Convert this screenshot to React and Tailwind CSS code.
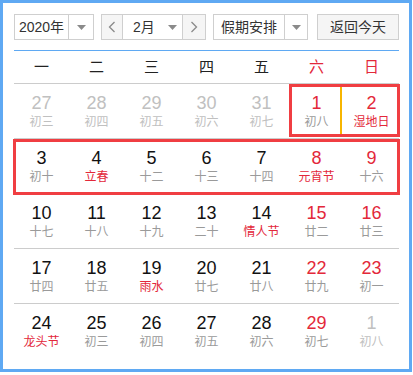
import React from "react";

const GRAY = "text-[#c0c0c0]";
const rows = [
  [
    ["27", "初三", "out"], ["28", "初四", "out"], ["29", "初五", "out"], ["30", "初六", "out"], ["31", "初七", "out"],
    ["1", "初八", "wk"], ["2", "湿地日", "wk", true],
  ],
  [
    ["3", "初十"], ["4", "立春", "", true], ["5", "十二"], ["6", "十三"], ["7", "十四"],
    ["8", "元宵节", "wk", true], ["9", "十六", "wk"],
  ],
  [
    ["10", "十七"], ["11", "十八"], ["12", "十九"], ["13", "二十"], ["14", "情人节", "", true],
    ["15", "廿二", "wk"], ["16", "廿三", "wk"],
  ],
  [
    ["17", "廿四"], ["18", "廿五"], ["19", "雨水", "", true], ["20", "廿七"], ["21", "廿八"],
    ["22", "廿九", "wk"], ["23", "初一", "wk"],
  ],
  [
    ["24", "龙头节", "", true], ["25", "初三"], ["26", "初四"], ["27", "初五"], ["28", "初六"],
    ["29", "初七", "wk"], ["1", "初八", "out"],
  ],
];

function Caret() {
  return (
    <svg width="9" height="5" viewBox="0 0 9 5" className="block">
      <path d="M0 0 L9 0 L4.5 5 Z" fill="#8a8a8a" />
    </svg>
  );
}

function Chevron({ dir }) {
  return (
    <svg width="8" height="12" viewBox="0 0 8 12" className="block">
      <path
        d={dir === "left" ? "M6.5 1 L1.5 6 L6.5 11" : "M1.5 1 L6.5 6 L1.5 11"}
        fill="none"
        stroke="#8a8a8a"
        strokeWidth="1.3"
      />
    </svg>
  );
}

function Cell({ d }) {
  const [num, lunar, kind, fest] = d;
  let numCls = "text-[#111]";
  let lunarCls = "text-[#9a9a9a]";
  if (kind === "out") {
    numCls = GRAY;
    lunarCls = GRAY;
  } else if (kind === "wk") {
    numCls = "text-[#e3283a]";
  }
  if (fest) lunarCls = "text-[#e3283a]";
  return (
    <div className="flex flex-col items-center pt-[9px]">
      <div className={`text-[18px] leading-[20px] ${numCls}`}>{num}</div>
      <div className={`mt-[1px] text-[12px] leading-4 ${lunarCls}`}>{lunar}</div>
    </div>
  );
}

export default function App() {
  return (
    <div
      className="w-[412px] h-[372px] border-[3px] border-[#5fa9f3] bg-white pt-[11px] pl-[11px] pr-[10px]"
      style={{ fontFamily: "'Liberation Sans', 'Noto Sans CJK SC', sans-serif" }}
    >
      {/* header */}
      <div className="flex items-center h-[26px] text-[14px] text-[#333]">
        <div className="flex h-[26px] w-[80px] border border-[#cfcfcf] bg-white">
          <div className="flex w-[54px] items-center justify-center border-r border-[#cfcfcf]">2020年</div>
          <div className="flex flex-1 items-center justify-center"><Caret /></div>
        </div>
        <div className="ml-[7px] flex h-[26px] w-[105px] border border-[#cfcfcf] bg-white">
          <div className="flex w-[21px] items-center justify-center border-r border-[#cfcfcf] bg-[#f5f5f5]"><Chevron dir="left" /></div>
          <div className="flex w-[60px] items-center border-r border-[#cfcfcf] pl-[10px]">
            <span>2月</span>
            <span className="ml-[13px]"><Caret /></span>
          </div>
          <div className="flex flex-1 items-center justify-center bg-[#f5f5f5]"><Chevron dir="right" /></div>
        </div>
        <div className="ml-[7px] flex h-[26px] w-[95px] border border-[#cfcfcf] bg-white">
          <div className="flex w-[71px] items-center justify-center border-r border-[#cfcfcf]">假期安排</div>
          <div className="flex flex-1 items-center justify-center"><Caret /></div>
        </div>
        <div className="ml-[9px] flex h-[26px] w-[82px] items-center justify-center border border-[#cfcfcf] bg-[#f5f5f5]">
          返回今天
        </div>
      </div>

      {/* blue line */}
      <div className="mt-[10px] h-px bg-[#5fa9f3]" />

      {/* weekdays */}
      <div className="grid h-[33px] grid-cols-7 items-center border-b border-[#cccccc] text-[15px]">
        {["一", "二", "三", "四", "五"].map((w) => (
          <div key={w} className="text-center text-[#222]">{w}</div>
        ))}
        <div className="text-center text-[#e3283a]">六</div>
        <div className="text-center text-[#e3283a]">日</div>
      </div>

      {/* days */}
      {rows.map((r, i) => (
        <div
          key={i}
          className={`relative grid h-[55px] grid-cols-7 ${i < rows.length - 1 ? "border-b border-[#cccccc]" : ""}`}
        >
          {r.map((d, j) => (
            <Cell key={j} d={d} />
          ))}
          {i === 0 && (
            <>
              <div className="absolute left-[326px] top-[1px] h-[51px] w-[2px] bg-[#f7b500]" />
              <div className="absolute left-[275px] top-0 h-[53px] w-[111px] border-[3px] border-[#f03e42]" />
            </>
          )}
          {i === 1 && (
            <div className="absolute left-[-1px] top-0 h-[56px] w-[387px] border-[3px] border-[#f03e42]" />
          )}
        </div>
      ))}
    </div>
  );
}
